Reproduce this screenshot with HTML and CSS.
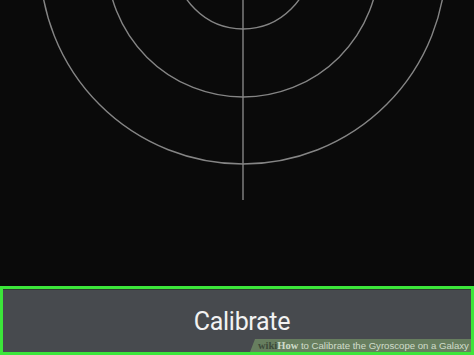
FILE: index.html
```html
<!DOCTYPE html>
<html>
<head>
<meta charset="utf-8">
<link rel="stylesheet" href="styles.css">
</head>
<body>
<div class="screen">
  <svg class="target" width="474" height="286" viewBox="0 0 474 286">
    <g fill="none" stroke="#858585" stroke-width="1.4">
      <circle cx="243" cy="-39" r="68"/>
      <circle cx="243" cy="-39" r="136"/>
      <circle cx="243" cy="-39" r="203"/>
      <line x1="243" y1="0" x2="243" y2="200"/>
    </g>
  </svg>
</div>
<div class="button-area">
  <div class="button">Calibrate</div>
  <div class="watermark"><span class="wiki">wiki</span><span class="how">How</span> to Calibrate the Gyroscope on a Galaxy</div>
</div>
</body>
</html>
```
FILE: styles.css
```css
html, body {
  margin: 0;
  padding: 0;
  background: #0a0a0a;
  width: 474px;
  height: 355px;
  overflow: hidden;
}
.screen {
  height: 286px;
}
.target {
  display: block;
}
.button-area {
  position: relative;
  height: 69px;
  box-sizing: border-box;
  border: 3px solid #3ce63a;
  background: #474a4e;
}
.button {
  height: 100%;
  display: flex;
  align-items: center;
  justify-content: center;
  font-family: Roboto, "Noto Sans", sans-serif;
  font-size: 25px;
  color: #f2f2f2;
  letter-spacing: -0.3px;
  padding-top: 1px;
  padding-left: 10px;
  box-sizing: border-box;
  border-top: 1px solid #2f3a33;
}
.watermark {
  position: absolute;
  right: 0;
  bottom: 0;
  width: 213px;
  height: 13px;
  padding-left: 8px;
  background: rgba(130, 170, 110, 0.55);
  clip-path: polygon(5px 0, 100% 0, 100% 100%, 0 100%);
  font-family: "Liberation Sans", Arial, sans-serif;
  font-size: 9.6px;
  line-height: 13px;
  color: rgba(235, 245, 230, 0.8);
  white-space: nowrap;
  overflow: hidden;
}
.wiki {
  font-family: "Liberation Serif", serif;
  font-weight: bold;
  color: #3d4a3a;
  font-size: 10.5px;
}
.how {
  font-family: "Liberation Serif", serif;
  font-weight: bold;
  font-size: 10.5px;
}
```
